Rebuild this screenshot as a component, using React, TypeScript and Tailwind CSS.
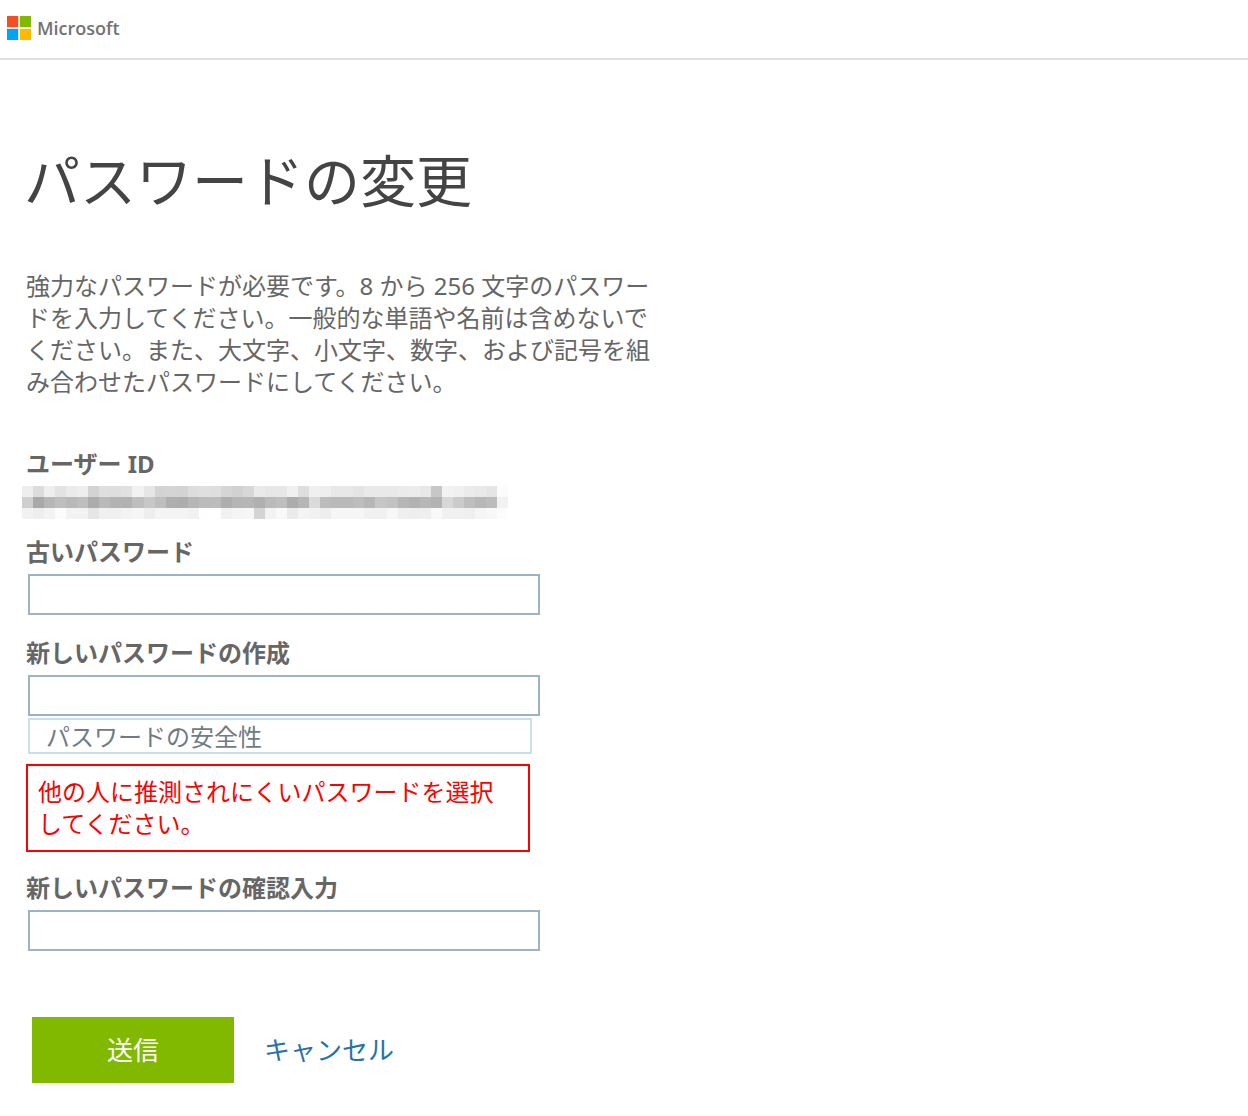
import type { ReactNode } from "react";

// Grey levels of the masked user ID, one row of hex pairs per line of cells
const MASK_ROWS = [
  "eedceee3ebeed3dfdee1f2e6d3d4d3dddfded5d1d7eae7e7f0def0eee8e8e4e9e9e9ebece8c7f2f0ebe9e5fc",
  "cfa9b6beb9beacb9b3b1bec7beafadb6bbbcaeb5b6b0babeacb6dabcb9b9bdb6c6c2b6b2b7b3d7cbbeb7bcf2",
  "f2eef3fcf3f3e6f0f0f3f6eef4f4f4f1fefff2f5f6d4f3f9ebf4f2eef6f6f6f1f1f7efeeeff9f1f1eff5f8fc",
].map((row) => row.match(/../g) ?? []);

function MicrosoftLogo() {
  return (
    <svg
      aria-hidden="true"
      viewBox="0 0 48 48"
      className="size-6 shrink-0"
    >
      <rect width="22.5" height="22.5" fill="#f25022" />
      <rect x="25.5" width="22.5" height="22.5" fill="#7fba00" />
      <rect y="25.5" width="22.5" height="22.5" fill="#00a4ef" />
      <rect x="25.5" y="25.5" width="22.5" height="22.5" fill="#ffb900" />
    </svg>
  );
}

function MaskedUserId() {
  return (
    <svg
      role="img"
      aria-labelledby="user-id-label"
      viewBox="0 0 44 3"
      preserveAspectRatio="none"
      shapeRendering="crispEdges"
      className="-ml-1 mt-1.5 h-[33px] w-[486px]"
    >
      {MASK_ROWS.map((row, y) =>
        row.map((level, x) => (
          <rect
            key={`${x}-${y}`}
            x={x}
            y={y}
            width="1"
            height="1"
            fill={`#${level}${level}${level}`}
          />
        )),
      )}
    </svg>
  );
}

type PasswordFieldProps = {
  id: string;
  label: string;
  className: string;
  children?: ReactNode;
};

function PasswordField({ id, label, className, children }: PasswordFieldProps) {
  return (
    <div className={className}>
      <label htmlFor={id} className="block font-bold">
        {label}
      </label>
      <input
        id={id}
        type="password"
        className="mx-0.5 mt-1.5 block h-[41px] w-full max-w-lg border-2 border-[#9db2c4] bg-white px-2 outline-none"
      />
      {children}
    </div>
  );
}

export default function App() {
  return (
    <div
      lang="ja"
      className="bg-white font-['Noto_Sans','Noto_Sans_CJK_JP',sans-serif] text-[24px] leading-8 text-[#666666]"
    >
      <header className="flex h-[60px] items-center gap-1.5 border-b-2 border-[#dcdee2] px-[7px] pb-0.5">
        <MicrosoftLogo />
        <span className="font-['Open_Sans',sans-serif] text-[18px] leading-6 font-semibold text-[#737373]">
          Microsoft
        </span>
      </header>

      <main className="px-[26px] pt-20 pb-8">
        <h1 className="-ml-0.5 text-[56px] leading-20 text-[#444444]">
          パスワードの変更
        </h1>

        <p className="mt-[50px] max-w-[640px]">
          強力なパスワードが必要です。8 から 256
          文字のパスワードを入力してください。一般的な単語や名前は含めないでください。また、大文字、小文字、数字、および記号を組み合わせたパスワードにしてください。
        </p>

        <form className="mt-[50px]" onSubmit={(e) => e.preventDefault()}>
          <div id="user-id-label" className="font-bold">
            ユーザー ID
          </div>
          <MaskedUserId />

          <PasswordField
            id="old-password"
            label="古いパスワード"
            className="mt-[17px]"
          />

          <PasswordField
            id="new-password"
            label="新しいパスワードの作成"
            className="mt-[22px]"
          >
            <div className="mx-0.5 mt-0.5 h-9 max-w-[504px] border-2 border-[#c6e0f2] px-4 pt-px text-[#717b85]">
              パスワードの安全性
            </div>
            <div
              role="alert"
              className="mt-2.5 max-w-[504px] border-2 border-[#ff0000] py-[10px] pr-4 pl-[10px] text-[#ff0000]"
            >
              他の人に推測されにくいパスワードを選択してください。
            </div>
          </PasswordField>

          <PasswordField
            id="confirm-password"
            label="新しいパスワードの確認入力"
            className="mt-5"
          />

          <div className="mt-[66px] ml-1.5 flex items-center gap-[30px] text-[26px]">
            <button
              type="submit"
              className="h-[66px] w-[202px] bg-[#80b900] text-white"
            >
              送信
            </button>
            <a href="#" className="text-[#2672a8]">
              キャンセル
            </a>
          </div>
        </form>
      </main>
    </div>
  );
}
